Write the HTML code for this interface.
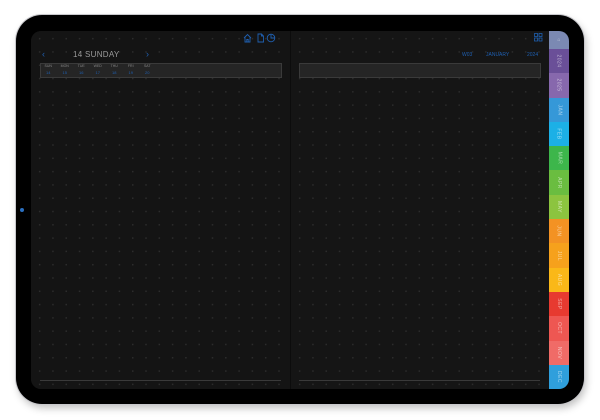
<!DOCTYPE html>
<html><head><style>
body{margin:0;width:600px;height:420px;background:#fff;position:relative;overflow:hidden;font-family:"Liberation Sans",sans-serif}
.dev{position:absolute;left:16px;top:15px;width:568px;height:389px;background:#000;border-radius:26px;box-shadow:0 0 0 1px #c8c8cc,2px 4px 8px rgba(0,0,0,.25)}
.scr{position:absolute;left:31px;top:31px;width:538px;height:358px;border-radius:10px;overflow:hidden;background:#131313}
.pg{position:absolute;top:0;height:358px;background-image:radial-gradient(circle,#2c2c2c 0.7px,transparent 1px);background-size:13.3px 13.3px}
.l{left:0;width:259px;background-color:#141414;background-position:2px 1px}
.r{left:259px;width:259px;background-color:#151515;background-position:2px 1px;border-left:1px solid #0c0c0c}
.bar{position:absolute;top:32px;height:13px;background:#252525;border:1px solid #3a3a3a}
.line{position:absolute;top:349px;height:1px;background:#3a3a3a}
.tabs{position:absolute;left:518px;top:0;width:20px}
.tab{height:24.3px;color:rgba(255,255,255,.55);font-size:5px;display:flex;align-items:center;justify-content:center}
.tab span{transform:rotate(90deg);letter-spacing:.5px}
.t{position:absolute;color:#1f5fb0;font-size:5px}
</style></head><body>
<div class="dev"></div>
<div style="position:absolute;left:20px;top:208px;width:4px;height:4px;border-radius:2px;background:#2a6fc0"></div>
<div class="scr">
<div class="pg l"></div>
<div class="pg r"></div>
<div class="bar" style="left:9px;width:240px;top:32px"></div>
<div class="bar" style="left:268px;width:240px"></div>
<div class="line" style="left:9px;width:241px"></div>
<div class="line" style="left:268px;width:241px"></div>
<div style="position:absolute;left:42px;top:19px;color:#9a9a9a;font-size:8px;letter-spacing:.3px">14 SUNDAY</div>
<div class="t" style="left:11px;top:18px;font-size:9px">‹</div>
<div class="t" style="left:115px;top:18px;font-size:9px">›</div>
<div style="position:absolute;left:9px;top:33px;font-size:3.5px;color:#888;display:flex">
<span style="width:16.5px;text-align:center">SUN</span><span style="width:16.5px;text-align:center">MON</span><span style="width:16.5px;text-align:center">TUE</span><span style="width:16.5px;text-align:center">WED</span><span style="width:16.5px;text-align:center">THU</span><span style="width:16.5px;text-align:center">FRI</span><span style="width:16.5px;text-align:center">SAT</span></div>
<div style="position:absolute;left:9px;top:39px;font-size:4px;color:#1f5fb0;display:flex">
<span style="width:16.5px;text-align:center">14</span><span style="width:16.5px;text-align:center">15</span><span style="width:16.5px;text-align:center">16</span><span style="width:16.5px;text-align:center">17</span><span style="width:16.5px;text-align:center">18</span><span style="width:16.5px;text-align:center">19</span><span style="width:16.5px;text-align:center">20</span></div>
<svg style="position:absolute;left:212px;top:2px" width="40" height="10" viewBox="0 0 40 10" fill="none" stroke="#1f5fb0" stroke-width="0.9">
<path d="M1 5L4.5 1.5 8 5M2 4.5V9h5V4.5M3.8 9V6.5h1.4V9"/>
<path d="M15 1h3.5l2 2v6H15z M18.5 1v2h2"/>
<circle cx="28" cy="5" r="3.8"/><path d="M28 1.2V5h3.8"/>
</svg>
<svg style="position:absolute;left:503px;top:2px" width="9" height="9" viewBox="0 0 9 9" fill="none" stroke="#1f5fb0" stroke-width="0.8"><rect x="0.5" y="0.5" width="3" height="3"/><rect x="5" y="0.5" width="3" height="3"/><rect x="0.5" y="5" width="3" height="3"/><rect x="5" y="5" width="3" height="3"/></svg>
<div class="t" style="left:431px;top:21px">W03</div>
<div class="t" style="left:455px;top:21px">JANUARY</div>
<div class="t" style="left:496px;top:21px">2024</div>
<div class="tabs">
<div class="tab" style="height:18px;background:#7b89b3">⌂</div>
<div class="tab" style="background:#6a4f98"><span>2024</span></div>
<div class="tab" style="background:#8768ad"><span>2025</span></div>
<div class="tab" style="background:#3598d8"><span>JAN</span></div>
<div class="tab" style="background:#1cb0e6"><span>FEB</span></div>
<div class="tab" style="background:#3db64b"><span>MAR</span></div>
<div class="tab" style="background:#6abd40"><span>APR</span></div>
<div class="tab" style="background:#8cc43f"><span>MAY</span></div>
<div class="tab" style="background:#f39223"><span>JUN</span></div>
<div class="tab" style="background:#f6a11c"><span>JUL</span></div>
<div class="tab" style="background:#fab818"><span>AUG</span></div>
<div class="tab" style="background:#e73a30"><span>SEP</span></div>
<div class="tab" style="background:#ee5752"><span>OCT</span></div>
<div class="tab" style="background:#f06b67"><span>NOV</span></div>
<div class="tab" style="background:#2f9fdc"><span>DEC</span></div>
</div>
</div>
</body></html>
